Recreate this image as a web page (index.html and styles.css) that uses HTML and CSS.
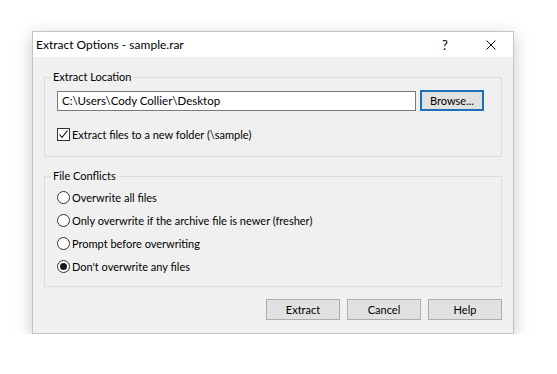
FILE: index.html
```html
<!DOCTYPE html>
<html lang="en">
<head>
  <meta charset="utf-8">
  <title>Extract Options - sample.rar</title>
  <link rel="stylesheet" href="styles.css">
</head>
<body>
  <div class="dialog">
    <div class="titlebar">
      <span class="title">Extract Options - sample.rar</span>
      <span class="help-btn">?</span>
      <span class="close-btn">
        <svg width="10" height="10" viewBox="0 0 10 10"><path d="M0.5 0.5 L9.5 9.5 M9.5 0.5 L0.5 9.5" stroke="#000" stroke-width="1" fill="none"/></svg>
      </span>
    </div>
    <div class="content">
      <fieldset class="group group-location">
        <legend>Extract Location</legend>
        <div class="path-row">
          <div class="path-input">C:\Users\Cody Collier\Desktop</div>
          <button class="btn btn-default">Browse...</button>
        </div>
        <label class="check-row">
          <span class="checkbox">
            <svg width="11" height="11" viewBox="0 0 11 11"><path d="M1.5 5.5 L4 8.5 L9.5 1.5" stroke="#000" stroke-width="1.1" fill="none"/></svg>
          </span>
          Extract files to a new folder (\sample)
        </label>
      </fieldset>
      <fieldset class="group group-conflicts">
        <legend>File Conflicts</legend>
        <label class="radio-row"><span class="radio"></span>Overwrite all files</label>
        <label class="radio-row"><span class="radio"></span>Only overwrite if the archive file is newer (fresher)</label>
        <label class="radio-row"><span class="radio"></span>Prompt before overwriting</label>
        <label class="radio-row"><span class="radio checked"></span>Don't overwrite any files</label>
      </fieldset>
      <div class="actions">
        <button class="btn">Extract</button>
        <button class="btn">Cancel</button>
        <button class="btn">Help</button>
      </div>
    </div>
  </div>
</body>
</html>
```

FILE: styles.css
```css
body {
  margin: 0;
  background: #fff;
  font-family: Lato, "Liberation Sans", sans-serif;
  font-size: 12px;
  color: #000;
}
.dialog {
  margin: 31px 0 0 32px;
  width: 480px;
  border: 1px solid #c4c4c4;
  background: #f0f0f0;
  box-shadow: 0 5px 16px rgba(0, 0, 0, 0.22);
}
.titlebar {
  display: flex;
  align-items: center;
  height: 25px;
  background: #fff;
  padding-left: 3px;
}
.title {
  flex: 1;
}
.help-btn {
  width: 14px;
  font-size: 13px;
  margin-right: 30px;
}
.close-btn {
  display: flex;
  width: 10px;
  margin-right: 17px;
}
.content {
  font-size: 11px;
  padding: 12px 11px 13px 11px;
}
.group {
  margin: 0;
  border: 1px solid #dcdcdc;
  padding: 5px 15px 15px 12px;
}
.group legend {
  padding: 0 2px;
  margin-left: -6px;
  line-height: 16px;
  font-size: 11px;
}
.path-row {
  display: flex;
  align-items: center;
  gap: 4px;
}
.path-input {
  width: 353px;
  height: 18px;
  line-height: 18px;
  background: #fff;
  border: 1px solid #7a7a7a;
  padding-left: 4px;
  font-size: 11.5px;
}
.btn {
  font: inherit;
  color: #000;
  width: 74px;
  height: 21px;
  padding: 0;
  background: #e1e1e1;
  border: 1px solid #adadad;
}
.btn-default {
  width: 64px;
  border: 2px solid #1c6fbb;
}
.check-row {
  display: flex;
  align-items: center;
  gap: 2px;
  margin-top: 16px;
  height: 14px;
}
.checkbox {
  display: flex;
  width: 11px;
  height: 11px;
  border: 1px solid #333;
  background: #fff;
}
.group-conflicts {
  margin-top: 11px;
  padding-top: 2px;
  padding-bottom: 8px;
}
.radio-row {
  display: flex;
  align-items: center;
  gap: 2px;
  height: 23px;
}
.radio {
  width: 11px;
  height: 11px;
  border: 1px solid #333;
  border-radius: 50%;
  background: #fff;
  display: flex;
  align-items: center;
  justify-content: center;
}
.radio.checked::after {
  content: "";
  width: 7px;
  height: 7px;
  border-radius: 50%;
  background: #1a1a1a;
}
.actions {
  display: flex;
  justify-content: flex-end;
  gap: 7px;
  margin-top: 12px;
}
```
